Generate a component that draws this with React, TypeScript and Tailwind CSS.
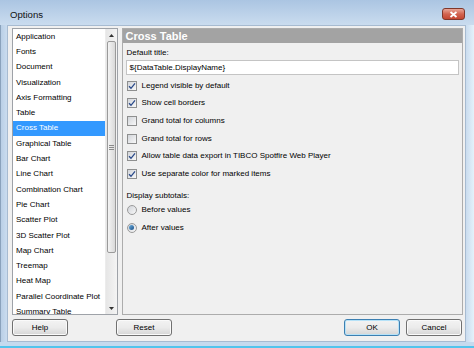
import React from "react";

const items = [
  "Application",
  "Fonts",
  "Document",
  "Visualization",
  "Axis Formatting",
  "Table",
  "Cross Table",
  "Graphical Table",
  "Bar Chart",
  "Line Chart",
  "Combination Chart",
  "Pie Chart",
  "Scatter Plot",
  "3D Scatter Plot",
  "Map Chart",
  "Treemap",
  "Heat Map",
  "Parallel Coordinate Plot",
  "Summary Table",
];

function CheckBox({ checked }: { checked: boolean }) {
  return (
    <div className="w-[10px] h-[10px] border border-[#8e8f8f] bg-gradient-to-br from-[#d2d5da] to-[#f8f8f8] flex items-center justify-center shrink-0">
      {checked && (
        <svg width="8" height="8" viewBox="0 0 8 8">
          <path d="M1 4.2 L3 6.3 L7 1.3" fill="none" stroke="#2a4a8a" strokeWidth="1.3" />
        </svg>
      )}
    </div>
  );
}

function Radio({ checked }: { checked: boolean }) {
  return (
    <div className="w-[10px] h-[10px] rounded-full border border-[#9a9a9a] bg-gradient-to-br from-[#d0d3d8] to-[#f8f8f8] flex items-center justify-center shrink-0">
      {checked && (
        <div className="w-[5px] h-[5px] rounded-full bg-gradient-to-br from-[#6cb0e0] to-[#1a4f86]" />
      )}
    </div>
  );
}

function Btn({ label, primary }: { label: string; primary?: boolean }) {
  return (
    <div
      className={
        "w-[56px] h-[17px] rounded-[3px] border flex items-center justify-center text-[8px] bg-gradient-to-b from-[#f3f3f3] via-[#ebebeb] to-[#d5d5d5] " +
        (primary
          ? "border-[#3c7fb1] shadow-[inset_0_0_0_1px_#b6e2f8]"
          : "border-[#707070] shadow-[inset_0_0_0_1px_#fafafa]")
      }
    >
      {label}
    </div>
  );
}

const checks: [string, boolean][] = [
  ["Legend visible by default", true],
  ["Show cell borders", true],
  ["Grand total for columns", false],
  ["Grand total for rows", false],
  ["Allow table data export in TIBCO Spotfire Web Player", true],
  ["Use separate color for marked items", true],
];

export default function App() {
  return (
    <div className="w-[474px] h-[348px] overflow-hidden flex flex-col bg-[#c5d9ee] font-['Liberation_Sans',Arial,sans-serif] text-black">
      {/* title bar */}
      <div className="h-[25px] flex bg-gradient-to-b from-[#abc5e2] to-[#cadcef] shrink-0">
        <div className="pl-[10px] pt-[9px] text-[9.6px] text-[#111] leading-[12px] flex-1">Options</div>
        <div className="mt-[8px] mr-[9px] w-[23px] h-[12px] rounded-[3px] border border-[#80372a] bg-gradient-to-b from-[#e9a698] via-[#d26450] to-[#c54530] flex items-center justify-center">
          <svg width="9" height="7" viewBox="0 0 9 7">
            <path d="M1.5 1 L7.5 6 M7.5 1 L1.5 6" stroke="#ffffff" strokeWidth="1.8" />
          </svg>
        </div>
      </div>
      {/* middle */}
      <div className="flex h-[317px] shrink-0">
        <div className="w-[7px] bg-gradient-to-r from-[#b9cfe6] to-[#cadcef] border-l border-[#8aa2bc]" />
        <div className="w-[459px] bg-[#f0f0f0] flex flex-col pt-[2px] pl-[4px] pr-[2px] border border-[#a7bbd1]">
          <div className="flex gap-[4px] h-[287px]">
            {/* list box */}
            <div className="w-[106px] h-[287px] border border-[#9ea2a8] bg-white flex">
              <div className="flex-1 overflow-hidden">
                {items.map((it) => (
                  <div
                    key={it}
                    className={
                      "h-[15.3px] flex items-center pl-[3px] text-[8px] whitespace-nowrap " +
                      (it === "Cross Table" ? "bg-[#3399ff] text-white" : "")
                    }
                  >
                    {it}
                  </div>
                ))}
              </div>
              <div className="w-[12px] flex flex-col bg-gradient-to-r from-[#e6e6e6] to-[#f4f4f4] border-l border-[#ececec]">
                <div className="h-[12px] flex items-center justify-center">
                  <svg width="5" height="3" viewBox="0 0 5 3">
                    <path d="M0 3 L2.5 0 L5 3 Z" fill="#333" />
                  </svg>
                </div>
                <div className="mx-[1px] h-[212px] rounded-[2px] border border-[#9a9a9a] bg-gradient-to-r from-[#f4f4f4] to-[#d9d9d9] flex flex-col items-center justify-center gap-[1px]">
                  <div className="w-[5px] h-[1px] bg-[#8a8a8a]" />
                  <div className="w-[5px] h-[1px] bg-[#8a8a8a]" />
                  <div className="w-[5px] h-[1px] bg-[#8a8a8a]" />
                </div>
                <div className="flex-1" />
                <div className="h-[12px] flex items-center justify-center">
                  <svg width="5" height="3" viewBox="0 0 5 3">
                    <path d="M0 0 L2.5 3 L5 0 Z" fill="#333" />
                  </svg>
                </div>
              </div>
            </div>
            {/* right panel */}
            <div className="w-[343px] h-[287px] border border-[#acacac] bg-[#f0f0f0] flex flex-col">
              <div className="h-[14px] bg-[#a3a3a3] text-white font-bold text-[11px] leading-[14px] pl-[3px]">
                Cross Table
              </div>
              <div className="flex flex-col px-[3px]">
                <div className="h-[12px] mt-[4px] flex items-center pl-[1px] text-[8px]">Default title:</div>
                <div className="h-[15px] mt-[1px] border border-[#c4c4c4] bg-white flex items-center pl-[3px] text-[8px]">
                  {"${DataTable.DisplayName}"}
                </div>
                <div className="mt-[2px] flex flex-col">
                  {checks.map(([label, c]) => (
                    <div key={label} className="h-[17.6px] flex items-center gap-[5px] pl-[1px] text-[8px]">
                      <CheckBox checked={c} />
                      <span>{label}</span>
                    </div>
                  ))}
                </div>
                <div className="h-[10px] mt-[8px] flex items-center pl-[1px] text-[8px]">Display subtotals:</div>
                <div className="h-[18px] flex items-center gap-[5px] pl-[1px] text-[8px]">
                  <Radio checked={false} />
                  <span>Before values</span>
                </div>
                <div className="h-[18px] flex items-center gap-[5px] pl-[1px] text-[8px]">
                  <Radio checked={true} />
                  <span>After values</span>
                </div>
              </div>
            </div>
          </div>
          {/* buttons */}
          <div className="flex mt-[4px] pr-[1px]">
            <Btn label="Help" />
            <div className="ml-[48px]">
              <Btn label="Reset" />
            </div>
            <div className="flex-1" />
            <Btn label="OK" primary />
            <div className="ml-[6px]">
              <Btn label="Cancel" />
            </div>
          </div>
        </div>
        <div className="w-[8px] bg-gradient-to-r from-[#cadcef] to-[#e4f2fb]" />
      </div>
      {/* bottom frame */}
      <div className="h-[6px] flex flex-col shrink-0">
        <div className="h-[4px] bg-[#c5daee]" />
        <div className="h-[2px] bg-[#52c4ec]" />
      </div>
    </div>
  );
}
